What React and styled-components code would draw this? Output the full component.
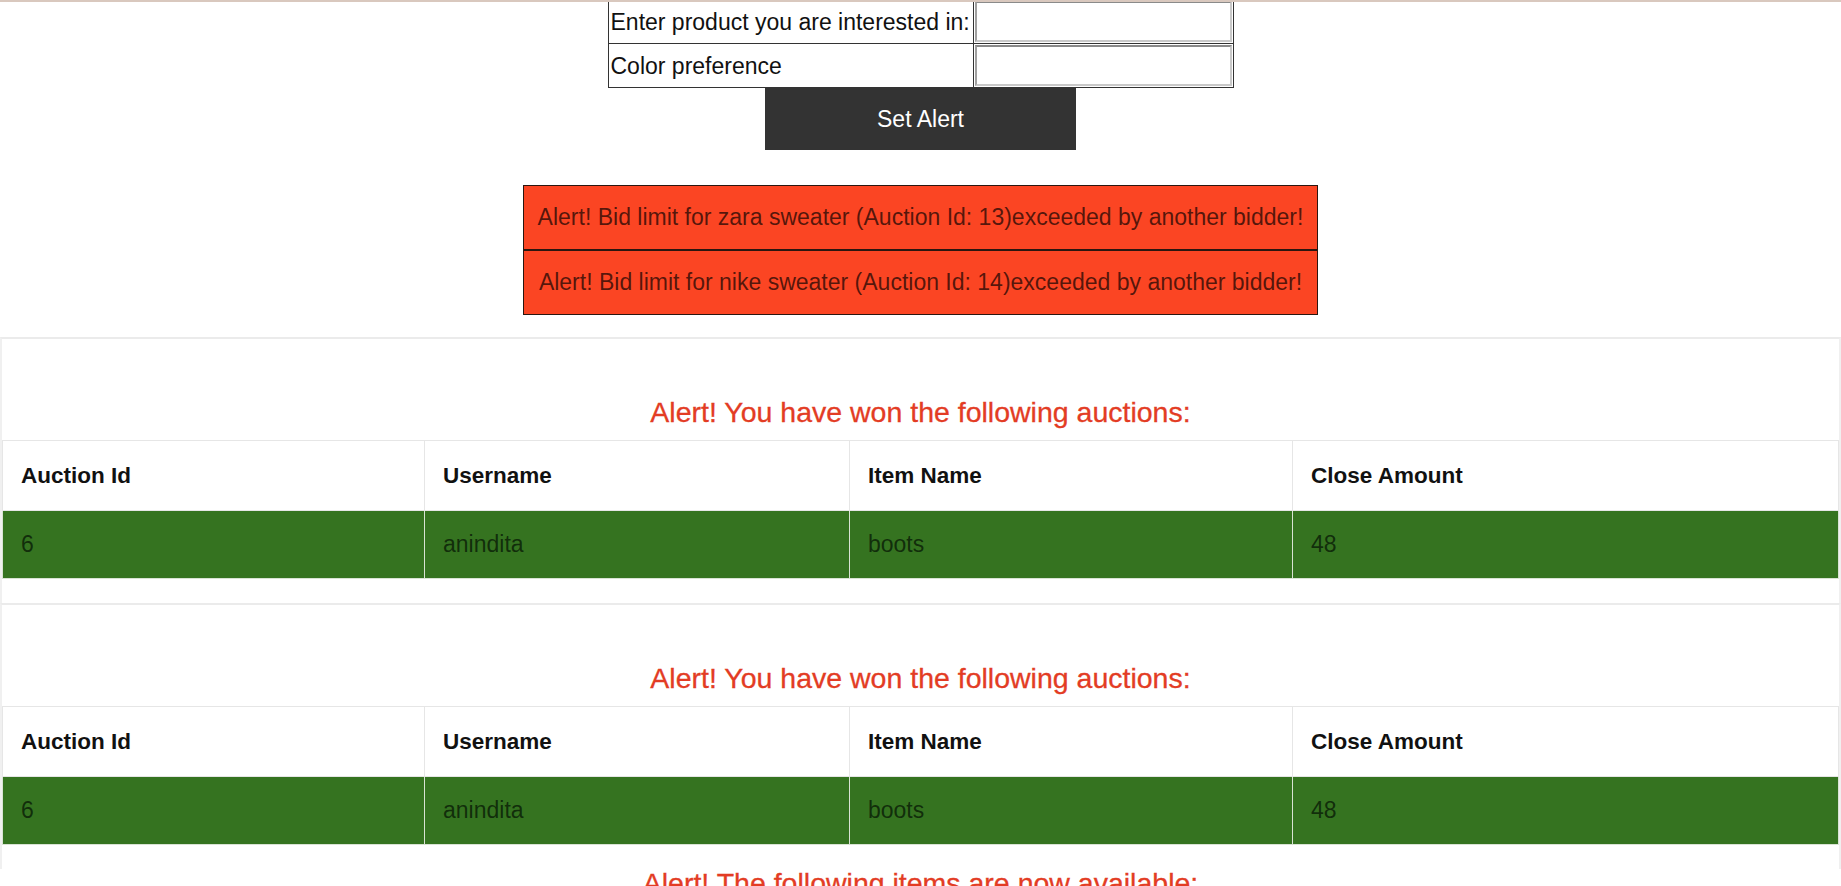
import React from "react";
import styled, { createGlobalStyle } from "styled-components";

const GlobalStyle = createGlobalStyle`
  html, body {
    margin: 0;
    padding: 0;
    background: #ffffff;
  }
  body {
    font-family: "Liberation Sans", Arial, Helvetica, sans-serif;
    color: #000;
    overflow: hidden;
  }
  * { box-sizing: border-box; }
`;

const TopEdge = styled.div`
  position: fixed;
  top: 0;
  left: 0;
  right: 0;
  height: 2px;
  background: #d9c8be;
  z-index: 10;
`;

const Page = styled.div`
  display: flex;
  flex-direction: column;
  width: 100%;
`;

const FormArea = styled.div`
  display: flex;
  flex-direction: column;
  align-items: center;
  margin-top: -1px;
  padding-bottom: 22px;
`;

const FormTable = styled.table`
  border-collapse: collapse;
  border: 1px solid #333;
  width: 626px;
`;

const LabelCell = styled.td`
  border: 1px solid #333;
  height: 44px;
  width: 365px;
  padding: 0 2px;
  font-size: 23px;
  line-height: 26px;
  white-space: nowrap;
  color: #111;
`;

const InputCell = styled.td`
  border: 1px solid #333;
  height: 44px;
  padding: 1px;
`;

const TextInput = styled.input`
  display: block;
  width: 100%;
  height: 41px;
  border: 2px solid #c9c9c9;
  border-top-color: #8a8a8a;
  border-left-color: #a0a0a0;
  background: #fff;
  margin: 0;
  padding: 0 4px;
  font-family: inherit;
  font-size: 20px;
`;

const SetAlertButton = styled.button`
  width: 311px;
  height: 62px;
  background: #333333;
  color: #ffffff;
  border: none;
  font-family: inherit;
  font-size: 23px;
  cursor: pointer;
  margin: 0;
`;

const AlertList = styled.div`
  display: flex;
  flex-direction: column;
  margin-top: 35px;
`;

const AlertBox = styled.div`
  width: 795px;
  height: 65px;
  display: flex;
  align-items: center;
  justify-content: center;
  background: #fb4523;
  border: 1px solid #2b1610;
  font-size: 23px;
  color: rgba(0, 0, 0, 0.68);
  white-space: nowrap;
`;

const Section = styled.section`
  display: flex;
  flex-direction: column;
  border-top: 2px solid #ebebeb;
  border-left: 2px solid #f0f0f0;
  border-right: 2px solid #f0f0f0;
  padding: 57px 0 24px;
`;

const Heading = styled.h3`
  margin: ${(p) => (p.$last ? "-2px 0 0" : "0 0 12px")};
  text-align: center;
  font-size: 28.5px;
  line-height: 32px;
  font-weight: normal;
  color: #e33c24;
  -webkit-text-stroke: 0.3px #e33c24;
`;

const DataTable = styled.table`
  width: 100%;
  border-collapse: collapse;
  table-layout: fixed;
  border: 1px solid #e6e6e6;
`;

const Col = styled.col`
  width: ${(p) => p.$w};
`;

const HeadCell = styled.th`
  height: 70px;
  padding: 0 18px;
  text-align: left;
  font-size: 22.5px;
  font-weight: bold;
  color: #111;
  background: #fff;
  border: 1px solid #e6e6e6;
`;

const DataRow = styled.tr`
  background: #357320;
`;

const DataCell = styled.td`
  height: 68px;
  padding: 0 18px;
  font-size: 23px;
  color: rgba(0, 10, 0, 0.68);
  border: 1px solid #d9e3d4;
`;

const alerts = [
  "Alert! Bid limit for zara sweater (Auction Id: 13)exceeded by another bidder!",
  "Alert! Bid limit for nike sweater (Auction Id: 14)exceeded by another bidder!",
];

const columns = [
  { label: "Auction Id", w: "422px" },
  { label: "Username", w: "425px" },
  { label: "Item Name", w: "443px" },
  { label: "Close Amount", w: "auto" },
];

const wins = [
  [{ id: 6, user: "anindita", item: "boots", amount: 48 }],
  [{ id: 6, user: "anindita", item: "boots", amount: 48 }],
];

function WinTable({ rows }) {
  return (
    <DataTable>
      <colgroup>
        {columns.map((c) => (
          <Col key={c.label} $w={c.w} />
        ))}
      </colgroup>
      <thead>
        <tr>
          {columns.map((c) => (
            <HeadCell key={c.label}>{c.label}</HeadCell>
          ))}
        </tr>
      </thead>
      <tbody>
        {rows.map((r, i) => (
          <DataRow key={i}>
            <DataCell>{r.id}</DataCell>
            <DataCell>{r.user}</DataCell>
            <DataCell>{r.item}</DataCell>
            <DataCell>{r.amount}</DataCell>
          </DataRow>
        ))}
      </tbody>
    </DataTable>
  );
}

export default function App() {
  return (
    <>
      <GlobalStyle />
      <TopEdge />
      <Page>
        <FormArea>
          <FormTable>
            <tbody>
              <tr>
                <LabelCell>Enter product you are interested in:</LabelCell>
                <InputCell>
                  <TextInput type="text" />
                </InputCell>
              </tr>
              <tr>
                <LabelCell>Color preference</LabelCell>
                <InputCell>
                  <TextInput type="text" />
                </InputCell>
              </tr>
            </tbody>
          </FormTable>
          <SetAlertButton>Set Alert</SetAlertButton>
          <AlertList>
            {alerts.map((a) => (
              <AlertBox key={a}>{a}</AlertBox>
            ))}
          </AlertList>
        </FormArea>
        {wins.map((rows, i) => (
          <Section key={i}>
            <Heading>Alert! You have won the following auctions:</Heading>
            <WinTable rows={rows} />
          </Section>
        ))}
        <Heading $last>Alert! The following items are now available:</Heading>
      </Page>
    </>
  );
}
